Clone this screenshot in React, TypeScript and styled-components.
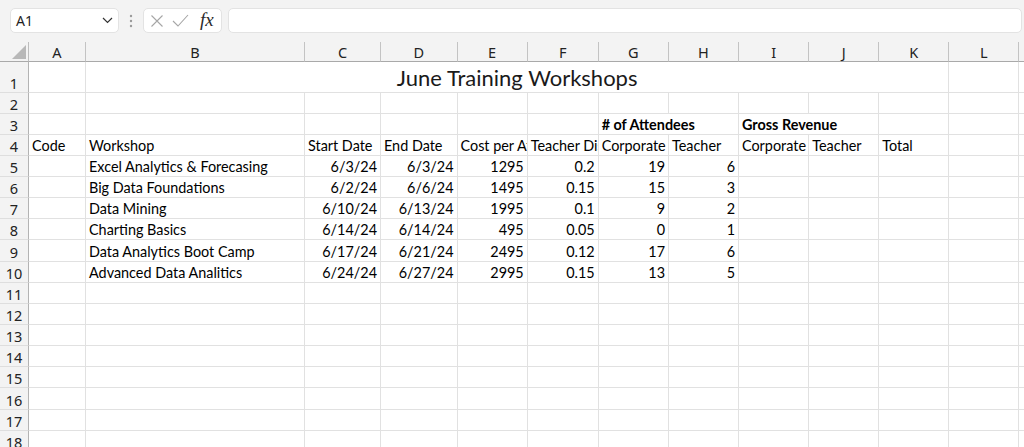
import React from "react";
import styled, { createGlobalStyle, css } from "styled-components";

const GlobalStyle = createGlobalStyle`
  html, body { margin: 0; padding: 0; background: #ffffff; overflow: hidden; }
  * { box-sizing: border-box; }
`;

const Page = styled.div`
  width: 1024px;
  height: 447px;
  overflow: hidden;
  display: flex;
  flex-direction: column;
  background: #ffffff;
`;

const FormulaBar = styled.div`
  height: 42px;
  flex: none;
  background: #f3f3f3;
  display: flex;
  align-items: flex-start;
  padding: 8px 2px 0 10px;
  gap: 0;
`;

const NameBox = styled.div`
  width: 109px;
  height: 25px;
  background: #ffffff;
  border: 1px solid #e3e3e3;
  border-radius: 5px;
  display: flex;
  align-items: center;
  justify-content: space-between;
  padding: 0 5px 0 5px;
  font-family: "Noto Sans", "Open Sans", sans-serif;
  font-size: 14px;
  color: #1f1f1f;
`;

const Dots = styled.div`
  width: 24px;
  height: 25px;
  display: flex;
  align-items: center;
  justify-content: center;
`;

const FuncBox = styled.div`
  width: 79px;
  height: 25px;
  background: #ffffff;
  border: 1px solid #e3e3e3;
  border-radius: 5px;
  display: flex;
  align-items: center;
  padding: 0 0 0 6px;
  gap: 8px;
`;

const Fx = styled.span`
  font-family: "Liberation Serif", "DejaVu Serif", serif;
  font-style: italic;
  font-weight: 400;
  font-size: 19px;
  line-height: 20px;
  color: #2b2b2b;
  margin-left: 3px;
  padding-bottom: 2px;
`;

const FormulaInput = styled.div`
  flex: 1;
  height: 25px;
  margin-left: 6px;
  background: #ffffff;
  border: 1px solid #e3e3e3;
  border-radius: 5px;
`;

const COLS = [29, 57, 219, 76, 76.5, 70.2, 71, 70.3, 70, 70.3, 70, 70, 70.2];

const Sheet = styled.div`
  display: grid;
  grid-template-columns: ${COLS.map((c) => c + "px").join(" ")} 1fr;
  grid-template-rows: 20px 30.5px repeat(17, 21.15px);
  flex: none;
`;

const Corner = styled.div`
  background: #f3f3f3;
  border-right: 1px solid #bdbdbd;
  border-bottom: 1px solid #a9a9a9;
  position: relative;
`;

const ColHead = styled.div<{ $last?: boolean }>`
  background: #f3f3f3;
  border-bottom: 1px solid #a9a9a9;
  border-right: ${(p) => (p.$last ? "none" : "1px solid #c3c3c3")};
  display: flex;
  align-items: center;
  justify-content: center;
  font-family: "Noto Sans", "Open Sans", sans-serif;
  font-size: 14.5px;
  color: #222222;
  padding-top: 1px;
`;

const RowHead = styled.div`
  background: #f3f3f3;
  border-right: 1px solid #b3b3b3;
  border-bottom: 1px solid #dedede;
  display: flex;
  align-items: flex-end;
  justify-content: center;
  font-family: "Noto Sans", "Open Sans", sans-serif;
  font-size: 14.5px;
  line-height: 18px;
  color: #222222;
`;

const Cell = styled.div<{
  $align?: "left" | "right" | "center";
  $bold?: boolean;
  $span?: number;
  $title?: boolean;
  $last?: boolean;
}>`
  border-right: ${(p) => (p.$last ? "none" : "1px solid #e1e1e1")};
  border-bottom: 1px solid #e1e1e1;
  grid-column: span ${(p) => p.$span ?? 1};
  display: flex;
  align-items: flex-end;
  justify-content: ${(p) =>
    p.$align === "right" ? "flex-end" : p.$align === "center" ? "center" : "flex-start"};
  padding: 0 3px 0 3px;
  overflow: hidden;
  white-space: nowrap;
  font-family: Lato, "Open Sans", sans-serif;
  font-size: 14.4px;
  line-height: 18px;
  font-weight: ${(p) => (p.$bold ? 700 : 400)};
  color: #000000;
  ${(p) =>
    p.$title &&
    css`
      font-size: 22px;
      line-height: 26px;
      padding-bottom: 1px;
      color: #1a1a1a;
    `}
`;

const Triangle = styled.svg`
  position: absolute;
  right: 2px;
  bottom: 2px;
`;

type CellDef = {
  v: string;
  align?: "left" | "right" | "center";
  bold?: boolean;
  span?: number;
  title?: boolean;
};

const LETTERS = ["A", "B", "C", "D", "E", "F", "G", "H", "I", "J", "K", "L", "M"];

const L = (v: string): CellDef => ({ v });
const R = (v: string): CellDef => ({ v, align: "right" });

const data: Record<number, Record<string, CellDef>> = {
  1: { B: { v: "June Training Workshops", align: "center", span: 10, title: true } },
  3: {
    G: { v: "# of Attendees", bold: true, span: 2 },
    I: { v: "Gross Revenue", bold: true, span: 2 },
  },
  4: {
    A: L("Code"),
    B: L("Workshop"),
    C: L("Start Date"),
    D: L("End Date"),
    E: L("Cost per Attendee"),
    F: L("Teacher Discount"),
    G: L("Corporate"),
    H: L("Teacher"),
    I: L("Corporate"),
    J: L("Teacher"),
    K: L("Total"),
  },
};

const workshops: [string, string, string, string, string, string, string][] = [
  ["Excel Analytics & Forecasing", "6/3/24", "6/3/24", "1295", "0.2", "19", "6"],
  ["Big Data Foundations", "6/2/24", "6/6/24", "1495", "0.15", "15", "3"],
  ["Data Mining", "6/10/24", "6/13/24", "1995", "0.1", "9", "2"],
  ["Charting Basics", "6/14/24", "6/14/24", "495", "0.05", "0", "1"],
  ["Data Analytics Boot Camp", "6/17/24", "6/21/24", "2495", "0.12", "17", "6"],
  ["Advanced Data Analitics", "6/24/24", "6/27/24", "2995", "0.15", "13", "5"],
];

workshops.forEach((w, i) => {
  data[5 + i] = {
    B: L(w[0]),
    C: R(w[1]),
    D: R(w[2]),
    E: R(w[3]),
    F: R(w[4]),
    G: R(w[5]),
    H: R(w[6]),
  };
});

function renderRow(r: number) {
  const out: React.ReactNode[] = [<RowHead key={`h${r}`}>{r}</RowHead>];
  const row = data[r] || {};
  let i = 0;
  while (i < LETTERS.length) {
    const col = LETTERS[i];
    const def = row[col];
    const span = def?.span ?? 1;
    const last = i + span >= LETTERS.length;
    out.push(
      <Cell
        key={`${col}${r}`}
        $align={def?.align}
        $bold={def?.bold}
        $span={span}
        $title={def?.title}
        $last={last}
      >
        {def?.v ?? ""}
      </Cell>
    );
    i += span;
  }
  return out;
}

export default function App() {
  const rows = Array.from({ length: 18 }, (_, i) => i + 1);
  return (
    <>
      <GlobalStyle />
      <Page>
        <FormulaBar>
          <NameBox>
            <span>A1</span>
            <svg width="11" height="7" viewBox="0 0 11 7">
              <polyline points="1,1 5.5,5.5 10,1" fill="none" stroke="#333" strokeWidth="1.2" />
            </svg>
          </NameBox>
          <Dots>
            <svg width="4" height="14" viewBox="0 0 4 14">
              <circle cx="2" cy="2" r="1.2" fill="#9a9a9a" />
              <circle cx="2" cy="7" r="1.2" fill="#9a9a9a" />
              <circle cx="2" cy="12" r="1.2" fill="#9a9a9a" />
            </svg>
          </Dots>
          <FuncBox>
            <svg width="14" height="14" viewBox="0 0 14 14">
              <path d="M1.5 1.5 L12.5 12.5 M12.5 1.5 L1.5 12.5" stroke="#a6a6a6" strokeWidth="1.1" fill="none" />
            </svg>
            <svg width="17" height="13" viewBox="0 0 17 13">
              <path d="M1 7 L6 12 L16 1" stroke="#a6a6a6" strokeWidth="1.1" fill="none" />
            </svg>
            <Fx>fx</Fx>
          </FuncBox>
          <FormulaInput />
        </FormulaBar>
        <Sheet>
          <Corner>
            <Triangle width="14" height="14" viewBox="0 0 14 14">
              <polygon points="14,0 14,14 0,14" fill="#b8b8b8" />
            </Triangle>
          </Corner>
          {LETTERS.map((l, i) => (
            <ColHead key={l} $last={i === LETTERS.length - 1}>
              {l === "M" ? "" : l}
            </ColHead>
          ))}
          {rows.map((r) => renderRow(r))}
        </Sheet>
      </Page>
    </>
  );
}
